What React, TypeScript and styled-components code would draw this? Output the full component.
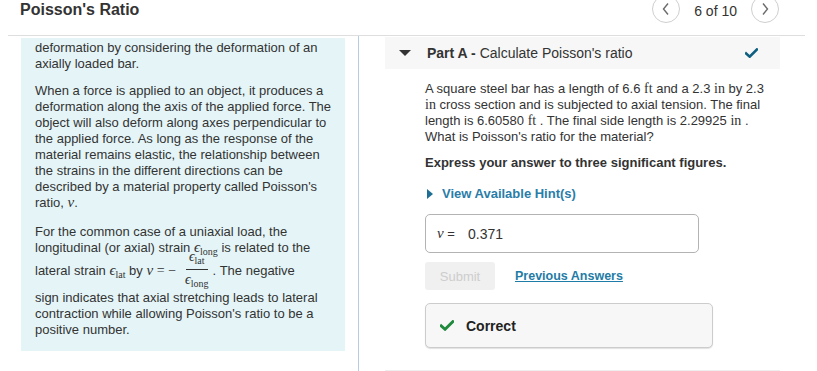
import React from "react";
import styled, { createGlobalStyle } from "styled-components";

const GlobalStyle = createGlobalStyle`
  html, body { margin: 0; padding: 0; background: #fff; }
  body {
    font-family: "Liberation Sans", Arial, Helvetica, sans-serif;
    color: #333;
    overflow: hidden;
  }
`;

const Page = styled.div`
  width: 817px;
  height: 371px;
  overflow: hidden;
  box-sizing: border-box;
  padding: 0 12px 0 8px;
`;

const Header = styled.header`
  margin-top: -5px;
  height: 41px;
  box-sizing: border-box;
  border-bottom: 1px solid #dedede;
  display: flex;
  align-items: flex-start;
  justify-content: space-between;
  padding: 0 26px 0 12px;
`;

const Title = styled.h1`
  margin: 0;
  font-size: 16px;
  font-weight: bold;
  line-height: 30px;
  color: #333;
`;

const Nav = styled.div`
  display: flex;
  align-items: center;
  gap: 14px;
  height: 28px;
`;

const NavButton = styled.button`
  width: 28px;
  height: 28px;
  border-radius: 50%;
  border: 1px solid #cfcfcf;
  background: #fff;
  padding: 0;
  display: flex;
  align-items: center;
  justify-content: center;
  color: #6b6b6b;
`;

const NavText = styled.span`
  font-size: 14px;
  color: #333;
  margin-top: 3px;
`;

const Body = styled.div`
  display: flex;
  align-items: stretch;
`;

const InfoPanel = styled.div`
  margin: 2px 0 0 13px;
  width: 324px;
  box-sizing: border-box;
  align-self: flex-start;
  padding: 2px 6px 13px 14px;
  background: #e5f5f7;
  font-size: 13px;
  line-height: 16px;
  color: #333;
`;

const InfoPara = styled.p<{ $gap?: number }>`
  margin: ${(p) => p.$gap ?? 0}px 0 0;
`;

const MathI = styled.span`
  font-family: "Liberation Serif", "Times New Roman", serif;
  font-style: italic;
  font-size: 15px;
  line-height: 1;
`;

const MathR = styled.span`
  font-family: "Liberation Serif", "Times New Roman", serif;
  font-size: 14px;
  line-height: 1;
`;

const Sub = styled.span`
  font-family: "Liberation Serif", "Times New Roman", serif;
  font-style: normal;
  font-size: 10px;
  vertical-align: -3px;
  line-height: 1;
`;

const FracLine = styled.span`
  display: block;
  line-height: 16px;
  padding: 4px 0 8px;
`;

const Frac = styled.span`
  display: inline-flex;
  flex-direction: column;
  align-items: center;
  vertical-align: middle;
  margin: -9px 1px -9px 6px;
  font-family: "Liberation Serif", "Times New Roman", serif;
  font-style: italic;
  font-size: 14px;
  line-height: 13px;
  position: relative;
  top: -2px;
`;

const Num = styled.span`
  padding: 0 3px 3px;
  border-bottom: 1px solid #333;
`;

const Den = styled.span`
  padding: 3px 3px 0;
`;

const Divider = styled.div`
  width: 1px;
  background: #b9cde0;
  margin-left: 13px;
  min-height: 340px;
`;

const RightCol = styled.section`
  margin: 1px 0 0 26px;
  width: 395px;
`;

const PartHeader = styled.div`
  height: 32px;
  background: #f7f7f7;
  display: flex;
  align-items: center;
  padding: 0 22px 0 14px;
  font-size: 14px;
  color: #333;
`;

const Caret = styled.span<{ $color?: string; $dir?: "down" | "right" }>`
  width: 0;
  height: 0;
  ${(p) =>
    p.$dir === "right"
      ? `border-top: 5px solid transparent; border-bottom: 5px solid transparent; border-left: 6px solid ${p.$color || "#333"};`
      : `border-left: 6px solid transparent; border-right: 6px solid transparent; border-top: 6px solid ${p.$color || "#333"};`}
`;

const PartTitle = styled.span`
  margin-left: 16px;
  flex: 1;
  b { font-weight: bold; }
`;

const Content = styled.div`
  padding-left: 40px;
  font-size: 13px;
  line-height: 16px;
  color: #333;
`;

const Question = styled.p`
  margin: 12px 0 0;
  width: 352px;
`;

const Instruction = styled.p`
  margin: 10px 0 0;
  font-weight: bold;
`;

const HintLink = styled.a`
  margin-top: 15px;
  display: flex;
  align-items: center;
  gap: 9px;
  font-weight: bold;
  color: #2a7da8;
  text-decoration: none;
  padding-left: 2px;
`;

const AnswerBox = styled.div`
  margin-top: 12px;
  width: 274px;
  height: 39px;
  box-sizing: border-box;
  border: 1px solid #b3b3b3;
  border-radius: 5px;
  display: flex;
  align-items: center;
  padding-left: 11px;
  font-size: 14px;
  color: #333;
`;

const AnswerLabel = styled.span`
  width: 31px;
  font-size: 13px;
`;

const Actions = styled.div`
  margin-top: 9px;
  display: flex;
  align-items: center;
  gap: 20px;
`;

const SubmitButton = styled.button`
  width: 70px;
  height: 28px;
  border: none;
  border-radius: 3px;
  background: #f0f0f0;
  color: #cdcdcd;
  font-family: inherit;
  font-size: 13px;
`;

const PrevLink = styled.a`
  color: #1f7ca6;
  font-weight: bold;
  font-size: 12.5px;
  text-decoration: underline;
`;

const Feedback = styled.div`
  margin-top: 13px;
  width: 288px;
  height: 45px;
  box-sizing: border-box;
  border: 1px solid #cccccc;
  border-radius: 5px;
  background: #f7f7f7;
  box-shadow: 0 1px 1px rgba(0, 0, 0, 0.12);
  display: flex;
  align-items: center;
  padding-left: 14px;
  gap: 12px;
  font-size: 14px;
  font-weight: bold;
  color: #222;
`;

const BottomRule = styled.div`
  margin-top: 22px;
  height: 1px;
  background: #eeeeee;
`;

const Check = ({ color, size = 14 }: { color: string; size?: number }) => (
  <svg width={size} height={size * 0.78} viewBox="0 0 18 14" aria-hidden>
    <path d="M1.5 7.5 L6.5 12 L16.5 2" fill="none" stroke={color} strokeWidth="3.6" strokeLinecap="square" />
  </svg>
);

const Chevron = ({ dir }: { dir: "left" | "right" }) => (
  <svg width="10" height="14" viewBox="0 0 10 14" aria-hidden>
    <path
      d={dir === "left" ? "M7 1.5 L2.5 7 L7 12.5" : "M3 1.5 L7.5 7 L3 12.5"}
      fill="none"
      stroke="currentColor"
      strokeWidth="1.4"
    />
  </svg>
);

export default function App() {
  return (
    <>
      <GlobalStyle />
      <Page>
        <Header>
          <Title>Poisson's Ratio</Title>
          <Nav>
            <NavButton aria-label="previous"><Chevron dir="left" /></NavButton>
            <NavText>6 of 10</NavText>
            <NavButton aria-label="next"><Chevron dir="right" /></NavButton>
          </Nav>
        </Header>
        <Body>
          <InfoPanel>
            <InfoPara>
              deformation by considering the deformation of an axially loaded bar.
            </InfoPara>
            <InfoPara $gap={11}>
              When a force is applied to an object, it produces a deformation along the axis of the applied force. The
              object will also deform along axes perpendicular to the applied force. As long as the response of the
              material remains elastic, the relationship between the strains in the different directions can be
              described by a material property called Poisson's ratio, <MathI>ν</MathI>.
            </InfoPara>
            <InfoPara $gap={13}>
              For the common case of a uniaxial load, the longitudinal (or axial) strain{" "}
              <MathI>ϵ</MathI><Sub>long</Sub> is related to the
              <FracLine>
                lateral strain <MathI>ϵ</MathI><Sub>lat</Sub> by <MathI>ν</MathI> <MathR>= −</MathR>
                <Frac>
                  <Num>ϵ<Sub>lat</Sub></Num>
                  <Den>ϵ<Sub>long</Sub></Den>
                </Frac>
                . The negative
              </FracLine>
              sign indicates that axial stretching leads to lateral contraction while allowing Poisson's ratio to be a
              positive number.
            </InfoPara>
          </InfoPanel>
          <Divider />
          <RightCol>
            <PartHeader>
              <Caret />
              <PartTitle><b>Part A -</b> Calculate Poisson's ratio</PartTitle>
              <Check color="#0f5f80" size={13} />
            </PartHeader>
            <Content>
              <Question>
                A square steel bar has a length of 6.6 <MathR>ft</MathR> and a 2.3 <MathR>in</MathR> by 2.3{" "}
                <MathR>in</MathR> cross section and is subjected to axial tension. The final length is 6.60580{" "}
                <MathR>ft</MathR> . The final side length is 2.29925 <MathR>in</MathR> . What is Poisson's ratio for the
                material?
              </Question>
              <Instruction>Express your answer to three significant figures.</Instruction>
              <HintLink href="#">
                <Caret $dir="right" $color="#1f6f94" />
                View Available Hint(s)
              </HintLink>
              <AnswerBox>
                <AnswerLabel><MathI>ν</MathI> =</AnswerLabel>
                0.371
              </AnswerBox>
              <Actions>
                <SubmitButton disabled>Submit</SubmitButton>
                <PrevLink href="#">Previous Answers</PrevLink>
              </Actions>
              <Feedback>
                <Check color="#1f8a3c" size={14} />
                Correct
              </Feedback>
            </Content>
            <BottomRule />
          </RightCol>
        </Body>
      </Page>
    </>
  );
}
